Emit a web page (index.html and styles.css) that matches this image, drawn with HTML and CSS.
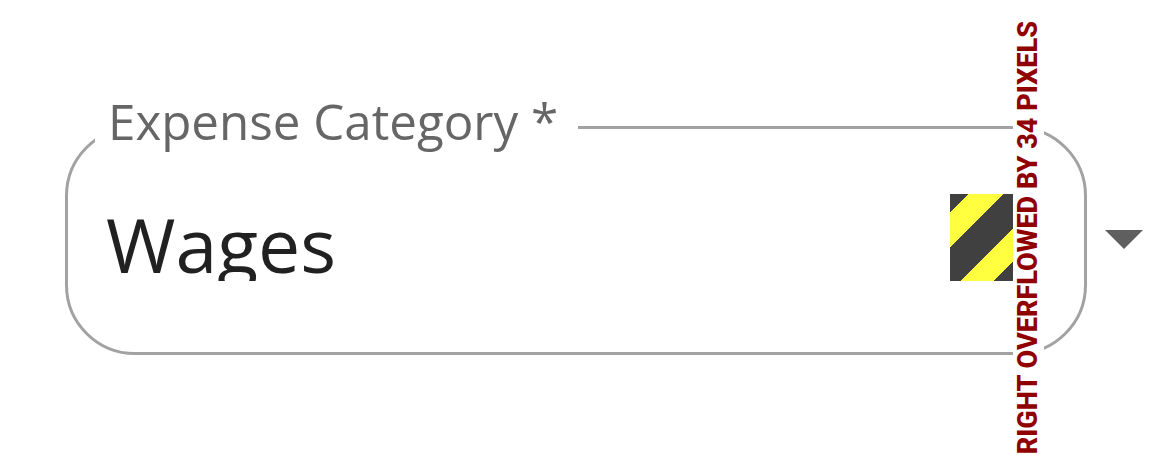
FILE: index.html
```html
<!DOCTYPE html>
<html>
<head>
<meta charset="utf-8">
<link rel="stylesheet" href="styles.css">
</head>
<body>
<div class="page">
  <div class="field">
    <span class="label">Expense Category *</span>
    <div class="row">
      <div class="value"><span class="value-text">Wages</span></div>
      <div class="stripes"></div>
    </div>
    <svg class="arrow" width="38" height="19" viewBox="0 0 38 19"><path d="M0 0 L38 0 L19 19 Z" fill="#5f5f5f"/></svg>
  </div>
  <div class="overflow-label"><span class="overflow-text">RIGHT OVERFLOWED BY 34 PIXELS</span></div>
</div>
</body>
</html>
```
FILE: styles.css
```css
html, body {
  margin: 0;
  padding: 0;
  background: #ffffff;
}
.page {
  position: relative;
  width: 1152px;
  height: 455px;
  overflow: hidden;
  padding: 126px 0 0 65px;
  box-sizing: border-box;
}
.field {
  position: relative;
  width: 1022px;
  height: 229px;
  box-sizing: border-box;
  border: 3px solid #a2a2a2;
  border-radius: 70px;
  padding: 65px 0 0 38px;
}
.label {
  position: absolute;
  left: 27px;
  top: -33px;
  padding: 0 20px 0 13px;
  background: #ffffff;
  font-family: "Open Sans", sans-serif;
  font-size: 49.3px;
  line-height: 49px;
  color: #666666;
  white-space: nowrap;
}
.row {
  position: relative;
  display: flex;
  height: 87px;
}
.value {
  flex: 1;
  height: 87px;
  overflow: hidden;
}
.value-text {
  display: block;
  margin-top: -1px;
  font-family: "Open Sans", sans-serif;
  font-size: 75.2px;
  line-height: normal;
  color: #212121;
}
.stripes {
  width: 94px;
  height: 87px;
  background: linear-gradient(135deg, #404040 0 13px, #ffff40 13px 38px, #404040 38px 69px, #ffff40 69px 92px, #404040 92px 120px, #ffff40 120px 148px, #404040 148px);
  margin-right: 40px;
}
.arrow {
  position: absolute;
  left: 1037px;
  top: 101px;
}
.overflow-label {
  position: absolute;
  left: 1013px;
  top: 20px;
  width: 31px;
  height: 435px;
  background: #ffffff;
  display: flex;
  align-items: center;
  justify-content: center;
}
.overflow-text {
  writing-mode: vertical-rl;
  transform: rotate(180deg);
  font-family: Roboto, "Liberation Sans", sans-serif;
  font-weight: 800;
  font-size: 27.1px;
  line-height: 1;
  color: #900000;
  white-space: nowrap;
}
```
